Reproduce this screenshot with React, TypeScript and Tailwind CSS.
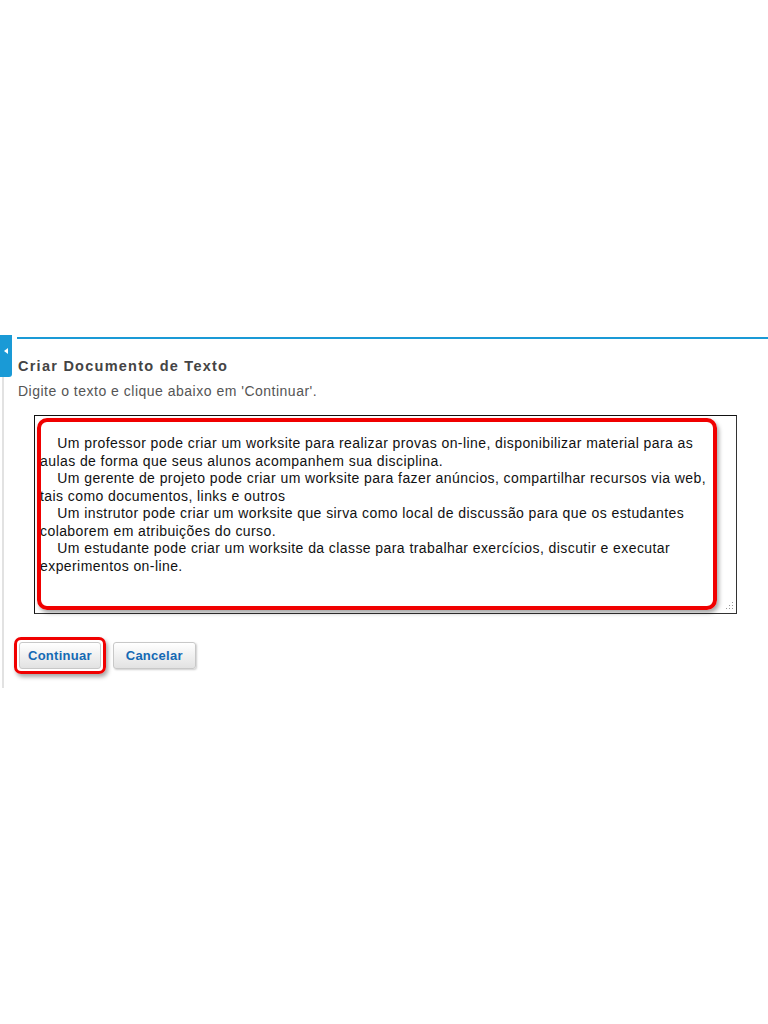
import React from 'react'

// ─── Content ──────────────────────────────────────────────────────────────────

const lines: { text: string; indent?: boolean }[] = [
  { text: 'Um professor pode criar um worksite para realizar provas on-line, disponibilizar material para as', indent: true },
  { text: 'aulas de forma que seus alunos acompanhem sua disciplina.' },
  { text: 'Um gerente de projeto pode criar um worksite para fazer anúncios, compartilhar recursos via web,', indent: true },
  { text: 'tais como documentos, links e outros' },
  { text: 'Um instrutor pode criar um worksite que sirva como local de discussão para que os estudantes', indent: true },
  { text: 'colaborem em atribuições do curso.' },
  { text: 'Um estudante pode criar um worksite da classe para trabalhar exercícios, discutir e executar', indent: true },
  { text: 'experimentos on-line.' },
]

// ─── Page ─────────────────────────────────────────────────────────────────────

export default function App() {
  return (
    <div className="w-[768px] h-[1024px] bg-white overflow-hidden" style={{ fontFamily: '"Liberation Sans", Arial, sans-serif' }}>
      <div className="h-[335px]" />

      <div className="flex">
        {/* Left rail */}
        <div className="w-[17px] flex flex-col shrink-0">
          <div className="w-[12px] h-[42px] bg-[#1a9ad6] rounded-br-[3px] flex pt-[13px] pl-[4px]">
            <div className="w-0 h-0 border-y-[3px] border-y-transparent border-r-[4px] border-r-white" />
          </div>
          <div className="ml-[2px] h-[311px] border-l-2 border-[#e2e2e2]" />
        </div>

        {/* Main */}
        <div className="flex-1 pt-[2px]">
          <div className="border-t-2 border-[#1a9ad6]" />
          <div className="pl-[1px]">
            <h1 className="mt-[18px] text-[14.5px] leading-[18px] font-bold text-[#444] tracking-[1.25px]">
              Criar Documento de Texto
            </h1>
            <p className="mt-[8px] text-[14px] leading-[17px] text-[#555] tracking-[0.5px]">
              Digite o texto e clique abaixo em 'Continuar'.
            </p>
          </div>

          {/* Text box */}
          <div className="mt-[15px] ml-[17px] w-[703px] h-[199px] border border-[#333] border-l-[#111] border-t-[#111] bg-white relative">
            <div className="absolute left-[2px] top-[2px] w-[680px] h-[192px] border-[4px] border-[#f00000] rounded-[10px] shadow-[2px_3px_4px_rgba(0,0,0,0.35)] pointer-events-none" />
            <div className="pt-[19px] pl-[5px] text-[14px] leading-[17.5px] text-[#111] tracking-[0.42px]">
              {lines.map((l, i) => (
                <div key={i} className="whitespace-pre">
                  {l.indent ? '    ' : ''}{l.text}
                </div>
              ))}
              <div className="w-px h-[15px] bg-black mt-[1px]" />
            </div>
            {/* Resize grip */}
            <svg className="absolute right-[1px] bottom-[1px]" width="12" height="12" viewBox="0 0 12 12">
              <rect x="9" y="2" width="1" height="1" fill="#999" />
              <rect x="9" y="5" width="1" height="1" fill="#999" />
              <rect x="6" y="5" width="1" height="1" fill="#999" />
              <rect x="9" y="8" width="1" height="1" fill="#999" />
              <rect x="6" y="8" width="1" height="1" fill="#999" />
              <rect x="3" y="8" width="1" height="1" fill="#999" />
            </svg>
          </div>

          {/* Buttons */}
          <div className="mt-[26px] flex items-center gap-[7px] -ml-[3px]">
            <div className="p-[2px] border-[3px] border-[#f00000] rounded-[7px] shadow-[2px_3px_4px_rgba(0,0,0,0.35)] -my-[3px]">
              <button className="h-[27px] px-[8px] rounded-[3px] border border-[#c8c8c8] bg-gradient-to-b from-[#ffffff] to-[#e2e2e2] text-[13px] font-bold text-[#1569b4] tracking-[0.02em]">
                Continuar
              </button>
            </div>
            <button className="h-[27px] px-[12px] rounded-[3px] border border-[#c8c8c8] bg-gradient-to-b from-[#ffffff] to-[#e2e2e2] text-[13px] font-bold text-[#1569b4] shadow-[1px_1px_2px_rgba(0,0,0,0.2)] tracking-[0.02em]">
              Cancelar
            </button>
          </div>
        </div>
      </div>
    </div>
  )
}
